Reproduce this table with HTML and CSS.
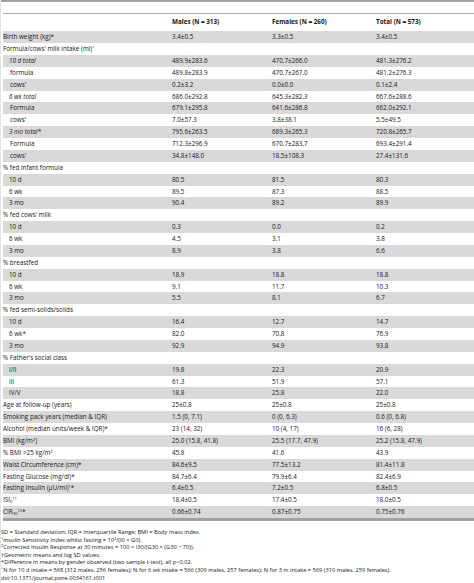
FILE: index.html
```html
<!DOCTYPE html>
<html>
<head>
<meta charset="utf-8">
<link rel="stylesheet" href="styles.css">
</head>
<body>
<div class="page">
  <div class="topbar"></div>
  <div class="spacer"></div>
  <div class="table">
    <div class="row head"><div></div><div>Males (N = 313)</div><div>Females (N = 260)</div><div>Total (N = 573)</div></div>
    <div class="row"><div>Birth weight (kg)*</div><div>3.4±0.5</div><div>3.3±0.5</div><div>3.4±0.5</div></div>
    <div class="row"><div>Formula/cows' milk intake (ml)<sup>^</sup></div><div></div><div></div><div></div></div>
    <div class="row"><div class="ind it">10 d total</div><div>489.9±283.6</div><div>470.7±266.0</div><div>481.3±276.2</div></div>
    <div class="row"><div class="ind2">formula</div><div>489.8±283.9</div><div>470.7±267.0</div><div>481.2±276.3</div></div>
    <div class="row"><div class="ind2">cows'</div><div>0.2±3.2</div><div>0.0±0.0</div><div>0.1±2.4</div></div>
    <div class="row"><div class="ind it">6 wk total</div><div>686.0±292.8</div><div>645.3±282.3</div><div>667.6±288.6</div></div>
    <div class="row"><div class="ind2">Formula</div><div>679.1±295.8</div><div>641.6±286.8</div><div>662.0±292.1</div></div>
    <div class="row"><div class="ind2">cows'</div><div>7.0±57.3</div><div>3.8±38.1</div><div>5.5±49.5</div></div>
    <div class="row"><div class="ind it">3 mo total*</div><div>795.6±263.5</div><div>689.3±265.3</div><div>720.8±265.7</div></div>
    <div class="row"><div class="ind2">Formula</div><div>712.3±296.9</div><div>670.7±283.7</div><div>693.4±291.4</div></div>
    <div class="row"><div class="ind2">cows'</div><div>34.8±148.0</div><div>18.5±108.3</div><div>27.4±131.6</div></div>
    <div class="row"><div>% fed infant formula</div><div></div><div></div><div></div></div>
    <div class="row"><div class="ind">10 d</div><div>80.5</div><div>81.5</div><div>80.3</div></div>
    <div class="row"><div class="ind">6 wk</div><div>89.5</div><div>87.3</div><div>88.5</div></div>
    <div class="row"><div class="ind">3 mo</div><div>90.4</div><div>89.2</div><div>89.9</div></div>
    <div class="row"><div>% fed cows' milk</div><div></div><div></div><div></div></div>
    <div class="row"><div class="ind">10 d</div><div>0.3</div><div>0.0</div><div>0.2</div></div>
    <div class="row"><div class="ind">6 wk</div><div>4.5</div><div>3.1</div><div>3.8</div></div>
    <div class="row"><div class="ind">3 mo</div><div>8.9</div><div>3.8</div><div>6.6</div></div>
    <div class="row"><div>% breastfed</div><div></div><div></div><div></div></div>
    <div class="row"><div class="ind">10 d</div><div>18.9</div><div>18.8</div><div>18.8</div></div>
    <div class="row"><div class="ind">6 wk</div><div>9.1</div><div>11.7</div><div>10.3</div></div>
    <div class="row"><div class="ind">3 mo</div><div>5.5</div><div>8.1</div><div>6.7</div></div>
    <div class="row"><div>% fed semi-solids/solids</div><div></div><div></div><div></div></div>
    <div class="row"><div class="ind">10 d</div><div>16.4</div><div>12.7</div><div>14.7</div></div>
    <div class="row"><div class="ind">6 wk*</div><div>82.0</div><div>70.8</div><div>76.9</div></div>
    <div class="row"><div class="ind">3 mo</div><div>92.9</div><div>94.9</div><div>93.8</div></div>
    <div class="row"><div>% Father's social class</div><div></div><div></div><div></div></div>
    <div class="row"><div class="ind">I/II</div><div>19.8</div><div>22.3</div><div>20.9</div></div>
    <div class="row"><div class="ind">III</div><div>61.3</div><div>51.9</div><div>57.1</div></div>
    <div class="row"><div class="ind">IV/V</div><div>18.8</div><div>25.8</div><div>22.0</div></div>
    <div class="row"><div>Age at follow-up (years)</div><div>25±0.8</div><div>25±0.8</div><div>25±0.8</div></div>
    <div class="row"><div>Smoking pack years (median &amp; IQR)</div><div>1.5 (0, 7.1)</div><div>0 (0, 6.3)</div><div>0.6 (0, 6.8)</div></div>
    <div class="row"><div>Alcohol (median units/week &amp; IQR)*</div><div>23 (14, 32)</div><div>10 (4, 17)</div><div>16 (6, 28)</div></div>
    <div class="row"><div>BMI (kg/m<sup>2</sup>)</div><div>25.0 (15.8, 41.8)</div><div>25.5 (17.7, 47.9)</div><div>25.2 (15.8, 47.9)</div></div>
    <div class="row"><div>% BMI &gt;25 kg/m<sup>2</sup></div><div>45.8</div><div>41.6</div><div>43.9</div></div>
    <div class="row"><div>Waist Circumference (cm)*</div><div>84.6±9.5</div><div>77.5±13.2</div><div>81.4±11.8</div></div>
    <div class="row"><div>Fasting Glucose (mg/dl)*</div><div>84.7±6.4</div><div>79.9±6.4</div><div>82.4±6.9</div></div>
    <div class="row"><div>Fasting Insulin (μU/ml)<sup>†</sup>*</div><div>6.4±0.5</div><div>7.2±0.5</div><div>6.8±0.5</div></div>
    <div class="row"><div>ISI<sub>0</sub><sup>†1</sup></div><div>18.4±0.5</div><div>17.4±0.5</div><div>18.0±0.5</div></div>
    <div class="row"><div>CIR<sub>30</sub><sup>†2</sup>*</div><div>0.66±0.74</div><div>0.87±0.75</div><div>0.75±0.76</div></div>
  </div>
  <div class="notes">
    <p>SD = Standard deviation; IQR = Interquartile Range; BMI = Body mass index.</p>
    <p><sup>1</sup>Insulin Sensitivity Index whilst fasting = 10<sup>4</sup>/(I0 × G0).</p>
    <p><sup>2</sup>Corrected Insulin Response at 30 minutes = 100 × I30/(G30 × (G30 − 70)).</p>
    <p>†Geometric means and log SD values.</p>
    <p>*Difference in means by gender observed (two sample t-test), all p&lt;0.02.</p>
    <p><sup>^</sup>N for 10 d intake = 568 (312 males, 256 females); N for 6 wk intake = 566 (309 males, 257 females); N for 3 m intake = 569 (310 males, 259 females).</p>
    <p>doi:10.1371/journal.pone.0034161.t001</p>
  </div>
</div>
</body>
</html>
```
FILE: styles.css
```css
html, body {
  margin: 0;
  padding: 0;
  background: #fff;
}
.page {
  width: 474px;
  font-family: "Open Sans", "Noto Sans", sans-serif;
  color: #161616;
  border-left: 1px solid #e4e4e4;
  box-sizing: border-box;
}
.topbar {
  height: 2px;
  background: #a3a3a3;
}
.spacer {
  height: 10.5px;
}
.table {
  margin-left: 2px;
  border-top: 1px solid #a8a8a8;
  border-bottom: 3px solid #a0a0a0;
}
.row {
  display: grid;
  grid-template-columns: 169px 100px 104px 1fr;
  height: 11.875px;
  align-items: center;
  font-size: 6.3px;
  line-height: 8px;
  white-space: nowrap;
}
.row:nth-child(even) {
  background: #d9d9d9;
}
.row.head {
  height: 17.7px;
  font-weight: 700;
  font-size: 6.3px;
}
.row > div {
  overflow: visible;
}
.ind { padding-left: 6px; }
.ind2 { padding-left: 7px; }
.it { font-style: italic; }
sup, sub {
  font-size: 4.2px;
  line-height: 0;
}
sup { vertical-align: 2.5px; }
sub { vertical-align: -1px; }
.notes {
  padding-top: 8px;
  font-size: 5.7px;
  line-height: 7.6px;
  white-space: nowrap;
}
.notes p { margin: 0; }
.notes sup { font-size: 3.8px; vertical-align: 2px; }
```
